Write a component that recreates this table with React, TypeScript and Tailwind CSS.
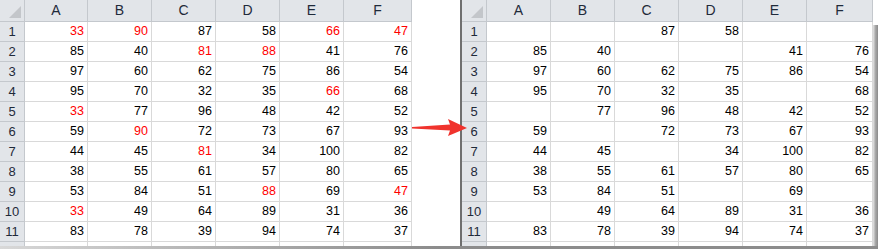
const left: (number | string)[][] = [
  [33, 90, 87, 58, 66, 47],
  [85, 40, 81, 88, 41, 76],
  [97, 60, 62, 75, 86, 54],
  [95, 70, 32, 35, 66, 68],
  [33, 77, 96, 48, 42, 52],
  [59, 90, 72, 73, 67, 93],
  [44, 45, 81, 34, 100, 82],
  [38, 55, 61, 57, 80, 65],
  [53, 84, 51, 88, 69, 47],
  [33, 49, 64, 89, 31, 36],
  [83, 78, 39, 94, 74, 37],
];

// cells removed on the right sheet are the red ones on the left
const red: string[] = [
  "0-0", "0-1", "0-4", "0-5",
  "1-2", "1-3",
  "3-4",
  "4-0",
  "5-1",
  "6-2",
  "8-3", "8-5",
  "9-0",
];

const cols = ["A", "B", "C", "D", "E", "F"];

function Corner() {
  return (
    <div className="h-[22px] bg-[#e2e5e9] border-r border-b border-[#c4c8cd] flex items-end justify-end pr-[3px] pb-[3px]">
      <svg width="12" height="12" viewBox="0 0 12 12">
        <polygon points="12,0 12,12 0,12" fill="#c3c6ca" />
      </svg>
    </div>
  );
}

function Sheet({ filtered, widths }: { filtered: boolean; widths: string }) {
  return (
    <div
      className="grid content-start h-full overflow-hidden font-['Liberation_Sans',Arial,sans-serif] text-[12.5px]"
      style={{ gridTemplateColumns: widths, gridAutoRows: "20px", gridTemplateRows: "22px" }}
    >
      <Corner />
      {cols.map((c) => (
        <div
          key={c}
          className="bg-[#e2e5e9] border-r border-b border-[#c4c8cd] flex items-center justify-center text-[#1f2a3a] text-[14px]"
        >
          {c}
        </div>
      ))}
      {[...left, ["", "", "", "", "", ""]].map((row, r) => (
        <div key={r} className="contents">
          <div className="bg-[#e2e5e9] border-r border-b border-[#c4c8cd] flex items-center justify-center text-[#1f2a3a] text-[13px]">
            {r < 11 ? r + 1 : ""}
          </div>
          {row.map((v, c) => {
            const isRed = red.includes(`${r}-${c}`);
            return (
              <div
                key={c}
                className={`border-r border-b border-[#d9d9d9] flex items-center justify-end pr-[3px] ${
                  isRed ? "text-[#ff0000]" : "text-black"
                }`}
              >
                {filtered && isRed ? "" : v}
              </div>
            );
          })}
        </div>
      ))}
    </div>
  );
}

export default function App() {
  return (
    <div className="relative w-[878px] h-[249px] bg-white flex flex-col overflow-hidden">
      <div className="flex h-[246px]">
        <div className="w-[412px] h-full">
          <Sheet filtered={false} widths="25px 63px 64px 64px 64px 64px 68px" />
        </div>
        <div className="w-[48px]" />
        <div className="w-[2px] bg-[#6f6f6f]" />
        <div className="w-[411px] h-full">
          <Sheet filtered={true} widths="25px 64px 64px 64px 64px 64px 66px" />
        </div>
        <div className="flex-1 flex flex-col">
          <div className="h-[25px]" />
          <div className="flex-1 bg-gradient-to-r from-[#e6e6e6] via-[#a8a8a8] to-[#8a8a8a]" />
        </div>
      </div>
      <div className="h-[3px] bg-gradient-to-r from-[#d8d8d8] via-[#8c8c8c] to-[#8c8c8c]" />

      <svg
        className="absolute left-[410px] top-[118px]"
        width="60"
        height="22"
        viewBox="0 0 60 22"
      >
        <polygon points="2,9 40,6.5 38,1 57,10 38,18 40,12.5 2,10.5" fill="#f0332d" />
      </svg>
    </div>
  );
}
